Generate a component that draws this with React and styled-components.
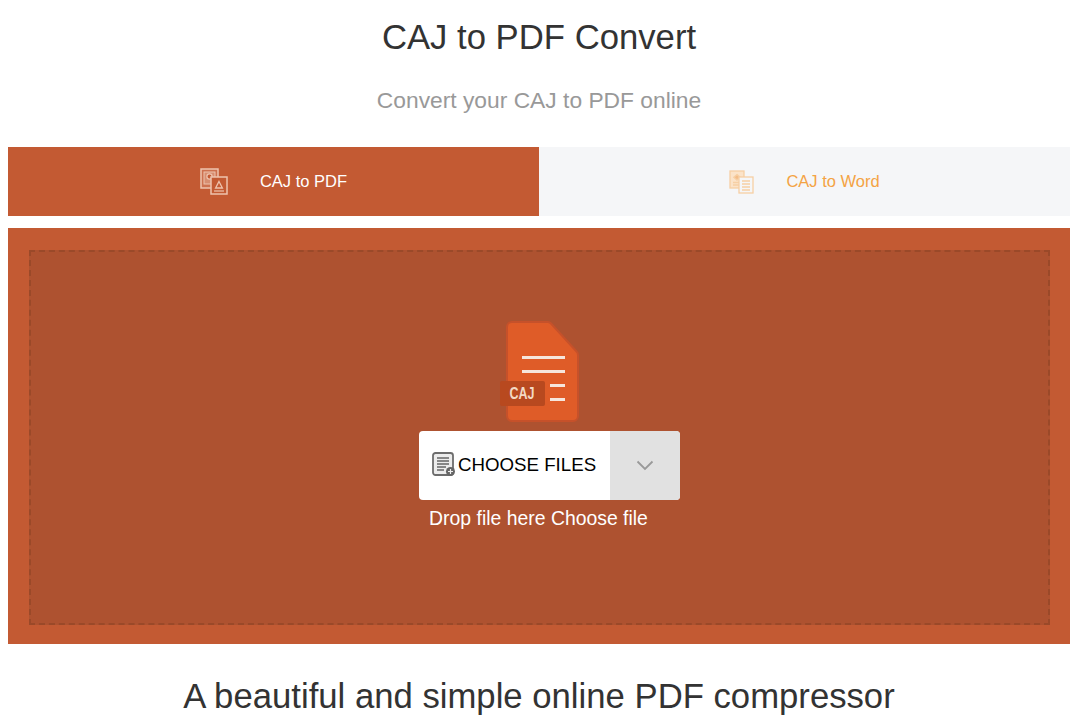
import React from 'react';
import styled, { createGlobalStyle } from 'styled-components';

const GlobalStyle = createGlobalStyle`
  html, body {
    margin: 0;
    padding: 0;
    background: #fff;
    font-family: "Liberation Sans", Arial, sans-serif;
    overflow: hidden;
  }
`;

const Page = styled.div`
  width: 1080px;
  height: 726px;
  overflow: hidden;
  padding: 0 10px 0 8px;
  box-sizing: border-box;
`;

const Title = styled.h1`
  margin: 0;
  padding-top: 17px;
  height: 40px;
  line-height: 40px;
  font-size: 34.7px;
  font-weight: 400;
  text-align: center;
  color: #333;
`;

const Subtitle = styled.p`
  margin: 0;
  padding-top: 28px;
  height: 30px;
  line-height: 30px;
  font-size: 22.8px;
  text-align: center;
  color: #999;
`;

const Tabs = styled.div`
  display: flex;
  margin-top: 32px;
  height: 69px;
`;

const Tab = styled.div`
  flex: 1;
  display: flex;
  align-items: center;
  justify-content: center;
  gap: 32px;
  font-size: 16.5px;
  background: ${p => (p.$active ? '#c35a33' : '#f5f6f8')};
  color: ${p => (p.$active ? '#fff' : '#f4a344')};
`;

const Panel = styled.section`
  margin-top: 12px;
  height: 416px;
  padding: 22px 20px 19px 21px;
  box-sizing: border-box;
  background: #c35a33;
`;

const DropZone = styled.div`
  height: 100%;
  box-sizing: border-box;
  border: 2px dashed #9a4929;
  background: #ae5230;
  display: flex;
  flex-direction: column;
  align-items: center;
  padding-top: 69px;
`;

const ChooseButton = styled.div`
  display: flex;
  width: 261px;
  height: 69px;
  margin: 8px 0 0 20px;
  border-radius: 4px;
  overflow: hidden;
  background: #fff;
`;

const ChooseLabel = styled.div`
  flex: 1;
  display: flex;
  align-items: center;
  gap: 2px;
  padding: 0 0 2px 13px;
  font-size: 18.7px;
  color: #000;
`;

const ChooseArrow = styled.div`
  width: 70px;
  display: flex;
  align-items: center;
  justify-content: center;
  background: #e1e1e1;
`;

const DropHint = styled.div`
  margin: 6px 2px 0 0;
  line-height: 24px;
  font-size: 19.4px;
  color: #fff;
`;

const Heading = styled.h2`
  margin: 32px 0 0;
  line-height: 40px;
  font-size: 34.7px;
  font-weight: 400;
  text-align: center;
  color: #333;
`;

const PdfIcon = () => (
  <svg width="28" height="27" viewBox="0 0 28 27" fill="none" stroke="#eec3ae" strokeWidth="1.5">
    <rect x="1" y="1" width="17" height="19" fill="#d98f70" fillOpacity="0.45" />
    <rect x="4" y="4" width="11" height="12" fill="#e2ab93" fillOpacity="0.5" strokeWidth="1" />
    <circle cx="9.5" cy="8.5" r="2.6" fill="#c35a33" strokeWidth="1.2" />
    <rect x="11" y="9" width="16" height="17" fill="#c35a33" />
    <path d="M19 13.5l3.4 6.5h-6.8z" strokeWidth="1.3" />
    <path d="M14 23h10" strokeWidth="1.2" />
  </svg>
);

const WordIcon = () => (
  <svg width="25" height="24" viewBox="0 0 25 24" fill="none" stroke="#f6cfa4" strokeWidth="1.3">
    <rect x="1" y="1" width="14" height="17" fill="#fbe3c9" />
    <path d="M8 4.5l3.2 2.8-3.2 2.8-3.2-2.8z" fill="#f4bd88" />
    <path d="M4 12.5h8M4 15h8" />
    <rect x="10" y="7" width="14" height="16" fill="#f5f6f8" />
    <path d="M13 11h8M13 14h8M13 17h8M13 20h8" />
  </svg>
);

const CajIcon = () => (
  <svg width="80" height="102" viewBox="0 0 80 102">
    <path
      d="M12 1h35a5 5 0 0 1 4 1.500l25.500 28a5 5 0 0 1 1.500 4V95a5 5 0 0 1-5 5H12a5 5 0 0 1-5-5V6a5 5 0 0 1 5-5z"
      fill="#df5c28"
      stroke="#c6512a"
      strokeWidth="2"
    />
    <g fill="#f6e6dc">
      <rect x="22" y="35" width="43" height="3" />
      <rect x="22" y="49" width="43" height="3" />
      <rect x="50" y="63" width="15" height="3" />
      <rect x="50" y="77" width="15" height="3" />
    </g>
    <rect x="0" y="60" width="45" height="25" rx="2" fill="#b8491f" />
    <text
      x="22"
      y="78"
      textAnchor="middle"
      textLength="25"
      lengthAdjust="spacingAndGlyphs"
      fontFamily="'Liberation Sans', sans-serif"
      fontSize="16"
      fontWeight="700"
      fill="#f3d9c4"
    >
      CAJ
    </text>
  </svg>
);

const ChooseIcon = () => (
  <svg width="24" height="25" viewBox="0 0 24 25" fill="none">
    <rect x="1" y="1" width="20" height="22" rx="2.500" fill="#ececec" stroke="#6d6d6d" strokeWidth="1.800" />
    <path d="M5 6h12M5 9h12M5 12h12M5 15h9M5 18h7" stroke="#666" strokeWidth="1.400" />
    <circle cx="18.500" cy="19.500" r="4.500" fill="#666" />
    <path d="M16 19.500h5M18.500 17v5" stroke="#eee" strokeWidth="1.200" />
  </svg>
);

const Chevron = () => (
  <svg width="18" height="11" viewBox="0 0 18 11" fill="none">
    <path d="M1.500 1.500l7.500 7.500 7.500-7.500" stroke="#999" strokeWidth="1.800" />
  </svg>
);

export default function App() {
  return (
    <Page>
      <GlobalStyle />
      <Title>CAJ to PDF Convert</Title>
      <Subtitle>Convert your CAJ to PDF online</Subtitle>
      <Tabs>
        <Tab $active>
          <PdfIcon />
          <span>CAJ to PDF</span>
        </Tab>
        <Tab>
          <WordIcon />
          <span>CAJ to Word</span>
        </Tab>
      </Tabs>
      <Panel>
        <DropZone>
          <CajIcon />
          <ChooseButton>
            <ChooseLabel>
              <ChooseIcon />
              CHOOSE FILES
            </ChooseLabel>
            <ChooseArrow>
              <Chevron />
            </ChooseArrow>
          </ChooseButton>
          <DropHint>Drop file here Choose file</DropHint>
        </DropZone>
      </Panel>
      <Heading>A beautiful and simple online PDF compressor</Heading>
    </Page>
  );
}
